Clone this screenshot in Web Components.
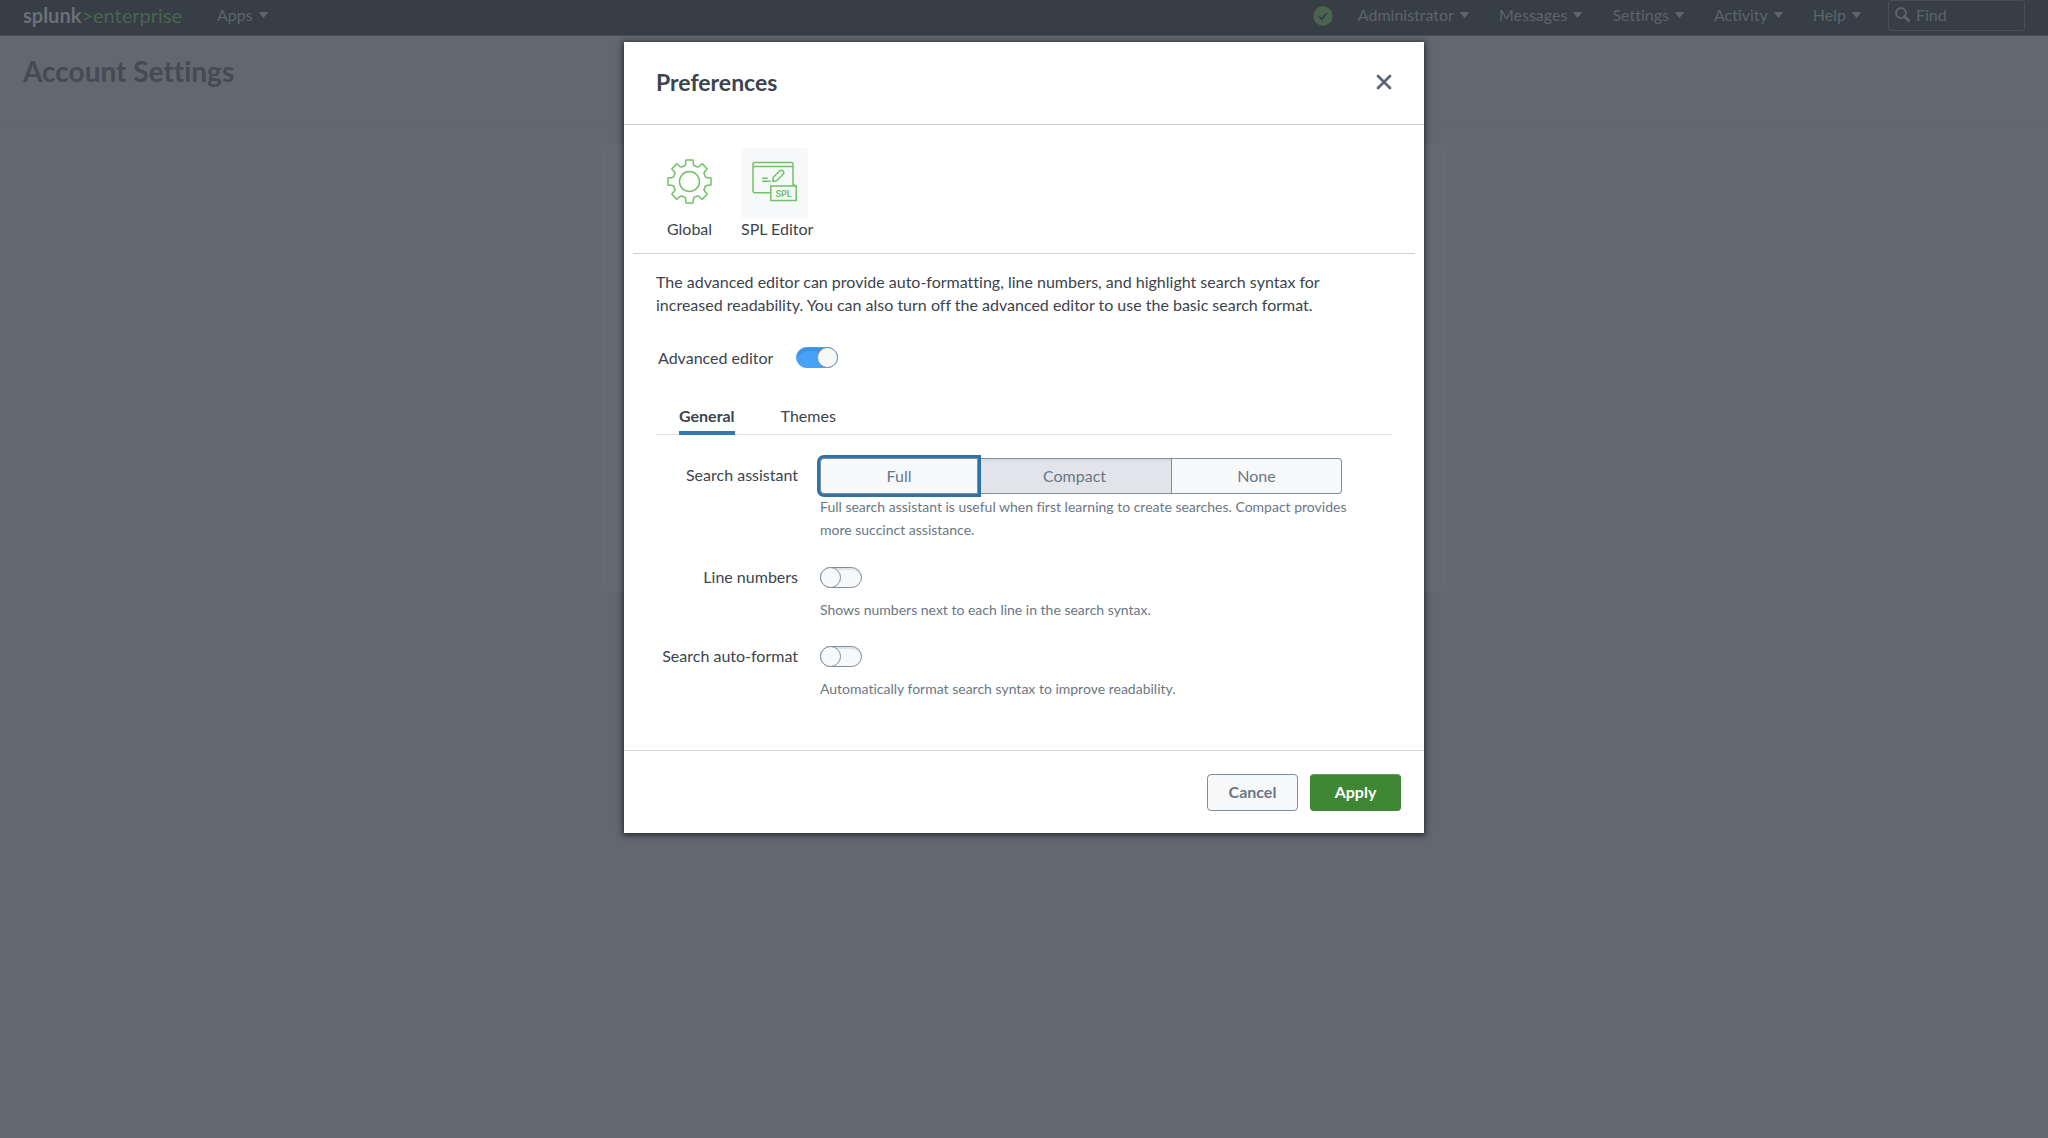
<!DOCTYPE html>
<html lang="en">
<head>
<meta charset="utf-8">
<title>Account Settings | Splunk Enterprise</title>
<style>
  :root {
    --ui-font: "Lato", "Open Sans", sans-serif;
    --ink: #3c444d;
    --muted: #6b7785;
    --control-border: #818d99;
    --control-bg: #f7f8fa;
  }
  body { margin: 0; min-height: 100vh; background: #63676f; color: var(--ink); font: 16px/23px var(--ui-font); font-variant-ligatures: none; }
</style>
</head>
<body>
<app-nav></app-nav>
<account-page>Account Settings</account-page>
<prefs-dialog heading="Preferences">
  <icon-choice slot="sections" icon="gear">Global</icon-choice>
  <icon-choice slot="sections" icon="spl" selected>SPL Editor</icon-choice>

  <span slot="intro">The advanced editor can provide auto-formatting, line numbers, and highlight search syntax for increased readability. You can also turn off the advanced editor to use the basic search format.</span>
  <pref-switch slot="master" label="Advanced editor" checked></pref-switch>
  <tab-strip slot="tabs"></tab-strip>

  <pref-row label="Search assistant" kind="segments">Full search assistant is useful when first learning to create searches. Compact provides more succinct assistance.</pref-row>
  <pref-row label="Line numbers" kind="switch">Shows numbers next to each line in the search syntax.</pref-row>
  <pref-row label="Search auto-format" kind="switch">Automatically format search syntax to improve readability.</pref-row>

  <action-button slot="actions">Cancel</action-button>
  <action-button slot="actions" primary>Apply</action-button>
</prefs-dialog>

<script>
const BASE = `*, *::before, *::after { box-sizing: border-box; }
  button, input { font: inherit; color: inherit; margin: 0; }
  button { cursor: pointer; }`;

const SWITCH = `
  input[type=checkbox] {
    appearance: none; display: flex; flex: none; width: 42px; height: 21px;
    border: 1px solid var(--control-border); border-radius: 11px; background: var(--control-bg);
    box-shadow: inset 0 2px 1px #dfe3e7;
  }
  input[type=checkbox]::before {
    content: ""; width: 21px; height: 21px; margin: -1px; flex: none;
    border: 1px solid var(--control-border); border-radius: 50%; background: var(--control-bg);
  }
  input[type=checkbox]:checked { justify-content: flex-end; background: #45a2f5; border-color: #45a2f5; box-shadow: inset 0 3px 1px #3c90dc; }`;

function define(name, render, setup) {
  customElements.define(name, class extends HTMLElement {
    constructor() { super(); this.attachShadow({ mode: "open" }); }
    connectedCallback() {
      const t = document.createElement("template");
      t.innerHTML = render(this);
      this.shadowRoot.replaceChildren(t.content.cloneNode(true));
      if (setup) setup(this, this.shadowRoot);
    }
  });
}

define("nav-menu", () => `
  <style>${BASE}
    :host { display: block; }
    button { display: flex; align-items: center; gap: 6px; padding: 0 0 2px; border: 0; background: none; white-space: nowrap; }
    svg { display: block; fill: currentColor; }
  </style>
  <button type="button" aria-haspopup="true"><slot></slot><svg width="9" height="6" viewBox="0 0 9 6" aria-hidden="true"><path d="M.6 0h7.8q.9.1.4.8L5 5.6q-.5.6-1 0L.2.8Q-.3.1.6 0Z"/></svg></button>`);

define("app-nav", () => `
  <style>${BASE}
    :host { display: block; background: #373e46; border-bottom: 1px solid #454c54; color: #5c646c; }
    nav { display: flex; align-items: center; height: 35px; padding: 0 23px 4px; }
    .logo { margin-right: 35px; padding-bottom: 2px; color: #4a6450; font-size: 20px; line-height: 28px; text-decoration: none; }
    .logo b { color: #6b7077; font-weight: 700; }
    .right { display: flex; align-items: center; gap: 30px; margin-left: auto; }
    .status { display: block; margin-right: -5px; }
    .find { display: flex; align-items: center; gap: 6px; width: 137px; height: 31px; padding: 0 6px 2px; margin-left: -3px; border: 1px solid #474e56; border-radius: 3px; }
    .find svg { flex: none; }
    input { flex: 1; min-width: 0; padding: 0; border: 0; outline: 0; background: none; }
    input::placeholder { color: #5c646c; opacity: 1; }
  </style>
  <nav aria-label="Main">
    <a class="logo" href="#"><b>splunk</b>&gt;enterprise</a>
    <nav-menu>Apps</nav-menu>
    <div class="right">
      <svg class="status" width="20" height="20" viewBox="0 0 20 20" aria-label="Healthy"><circle cx="10" cy="10" r="9.7" fill="#4a6450"/><path d="m6 10.4 2.7 2.8L14 7" fill="none" stroke="#373e46" stroke-width="1.8"/></svg>
      <nav-menu>Administrator</nav-menu>
      <nav-menu>Messages</nav-menu>
      <nav-menu>Settings</nav-menu>
      <nav-menu>Activity</nav-menu>
      <nav-menu>Help</nav-menu>
      <label class="find">
        <svg width="15" height="15" viewBox="0 0 15 15" fill="none" stroke="#5c646c" aria-hidden="true"><circle cx="6" cy="6" r="4.9" stroke-width="2"/><path d="m9.5 9.5 4 4" stroke-width="3" stroke-linecap="round"/></svg>
        <input type="text" placeholder="Find" aria-label="Find">
      </label>
    </div>
  </nav>`);

define("account-page", () => `
  <style>${BASE}
    :host { display: block; }
    h1 { margin: 0; padding: 17px 23px 32px; border-bottom: 1px solid #61656d; color: #434b53; font-size: 28px; line-height: 36px; font-weight: 700; }
    .panel { width: 846px; max-width: 100%; height: 446px; margin: 23px auto 0; background: #666a72; }
  </style>
  <h1><slot></slot></h1>
  <div class="panel"></div>`);

const ICONS = {
  gear: `<svg width="45" height="45" viewBox="0 0 45 45" fill="none" stroke="#72c168" stroke-width="1.5" stroke-linejoin="round"><circle cx="22.5" cy="22.5" r="10"/><path id="g" d=""/></svg>`,
  spl: `<svg width="45" height="45" viewBox="0 0 45 45" fill="none" stroke="#72c168" stroke-width="1.5">
    <path d="M18 33.8H3Q1 33.8 1 31.800V5.500Q1 3.500 3 3.500H39Q41 3.500 41 5.500V26.800M1 7.500H41M41 24.500l3.200 3.200"/>
    <path d="M18.800 26.900H44.200V41.500H18.800Z"/>
    <path d="M10.200 19.200h5.600M10.200 22.200h8.400"/>
    <path d="M20.800 22.600l.6-4.400 6.400-6.400q1.800-1.200 3.300.3 1.300 1.500 0 3.200l-6.400 6.400Z" stroke-linejoin="round"/>
    <text x="31.500" y="37.700" text-anchor="middle" fill="#72c168" stroke="none" font-family="Roboto, sans-serif" font-weight="700" font-size="9">SPL</text></svg>`
};

// Outline of an eight-toothed cog with hollows between the teeth.
function cogPath(c) {
  const pt = (r, deg) => {
    const a = deg * Math.PI / 180;
    return (c + r * Math.sin(a)).toFixed(2) + " " + (c - r * Math.cos(a)).toFixed(2);
  };
  let d = "M" + pt(21.8, -9);
  for (let k = 0; k < 8; k++) {
    const a = k * 45;
    d += `L${pt(21.8, a + 9)}Q${pt(21.2, a + 11)} ${pt(18.5, a + 11.5)}Q${pt(15.8, a + 15)} ${pt(16.6, a + 22.5)}Q${pt(15.8, a + 30)} ${pt(18.5, a + 33.5)}Q${pt(21.2, a + 34)} ${pt(21.8, a + 36)}`;
  }
  return d + "Z";
}

define("icon-choice", el => `
  <style>${BASE}
    :host { display: block; width: 67px; }
    button { display: flex; flex-direction: column; align-items: center; width: 100%; padding: 0; border: 0; background: none; line-height: 20px; white-space: nowrap; }
    .tile { display: grid; place-items: center; width: 67px; height: 71px; padding-bottom: 4px; border-radius: 4px; }
    :host([selected]) .tile { background: #f7f8fa; }
    :host([selected]) button { align-items: flex-start; }
    svg { display: block; }
  </style>
  <button type="button"><span class="tile">${ICONS[el.getAttribute("icon")]}</span><slot></slot></button>`,
  (el, root) => {
    const g = root.getElementById("g");
    if (g) g.setAttribute("d", cogPath(22.5));
  });

define("pref-switch", el => `
  <style>${BASE}${SWITCH}
    :host { display: block; }
    div { display: flex; align-items: center; gap: 23px; padding-left: 2px; }
  </style>
  <div><label for="s">${el.getAttribute("label")}</label><input type="checkbox" role="switch" id="s" ${el.hasAttribute("checked") ? "checked" : ""}></div>`);

define("tab-strip", () => `
  <style>${BASE}
    :host { display: block; border-bottom: 1px solid #e1e6eb; }
    div { display: flex; gap: 46px; padding-left: 23px; margin-bottom: -1px; }
    button { padding: 0 0 4px; border: 0; border-bottom: 4px solid transparent; background: none; }
    button[aria-selected=true] { border-bottom-color: #2f78b7; font-weight: 700; }
  </style>
  <div role="tablist"><button type="button" role="tab" aria-selected="true">General</button><button type="button" role="tab" aria-selected="false">Themes</button></div>`);

define("segment-control", () => `
  <style>${BASE}
    :host { display: block; margin-right: 50px; }
    div { display: grid; grid-template-columns: 158fr 194fr 170fr; color: var(--muted); }
    button { height: 36px; padding: 0 0 2px; border: 1px solid var(--control-border); border-left-width: 0; background: var(--control-bg); }
    button:first-child { border-left-width: 1px; border-radius: 4px 0 0 4px; box-shadow: 0 0 0 3px #2f72a8; }
    button:last-child { border-radius: 0 4px 4px 0; }
    button[aria-pressed=true] { background: #e1e5ea; box-shadow: inset 0 2px 1px #d5dae0; }
    button:first-child { z-index: 1; }
  </style>
  <div role="group" aria-label="Search assistant">
    <button type="button" aria-pressed="false">Full</button>
    <button type="button" aria-pressed="true">Compact</button>
    <button type="button" aria-pressed="false">None</button>
  </div>`);

define("pref-row", el => {
  const sw = el.getAttribute("kind") === "switch";
  return `
  <style>${BASE}${SWITCH}
    :host { display: grid; grid-template-columns: 142px 1fr; column-gap: 22px; padding-right: 20px; }
    :host([kind=segments]) { padding-right: 0; padding-bottom: 1px; }
    .label { text-align: right; white-space: nowrap; line-height: ${sw ? 19 : 34}px; }
    p { grid-column: 2; margin: ${sw ? 10 : 1}px 0 0; max-width: 545px; color: var(--muted); font-size: 14px; line-height: 23px; }
  </style>
  ${sw ? `<label class="label" for="c">${el.getAttribute("label")}</label><input type="checkbox" role="switch" id="c">`
       : `<span class="label">${el.getAttribute("label")}</span><segment-control></segment-control>`}
  <p><slot></slot></p>`;
});

define("action-button", () => `
  <style>${BASE}
    :host { display: block; }
    button { min-width: 91px; height: 37px; padding: 0 16px 2px; border: 1px solid var(--control-border); border-radius: 4px; background: var(--control-bg); color: var(--muted); font-weight: 700; }
    :host([primary]) button { border-color: #3f8635; border-top-color: #63a05a; background: #3f8635; color: #fff; }
  </style>
  <button type="button"><slot></slot></button>`);

define("prefs-dialog", el => `
  <style>${BASE}
    :host { position: absolute; inset: 0; display: flex; justify-content: center; align-items: flex-start; padding-top: 42px; }
    .dialog { width: 800px; max-width: 100%; background: #fff; box-shadow: 0 1px 6px 1px rgba(20, 26, 31, .8); }
    header { display: flex; align-items: center; justify-content: space-between; height: 83px; padding: 0 32px 2px; border-bottom: 1px solid #c3cbd4; }
    h2 { margin: 0; font-size: 23px; line-height: 30px; font-weight: 700; }
    .close { display: block; padding: 0; border: 0; background: none; }
    .close svg { display: block; }
    .sections { display: flex; gap: 18px; margin: 0 9px; padding: 23px 23px 14px; border-bottom: 1px solid #cfd3dc; }
    .body { padding: 16px 32px 50px; }
    .intro { width: 680px; margin: 0 0 30px; }
    .tabs { margin: 35px 0 23px; }
    .rows { display: flex; flex-direction: column; gap: 25px; }
    footer { display: flex; justify-content: flex-end; gap: 12px; padding: 23px 23px 22px; border-top: 1px solid #d5d9e0; }
  </style>
  <section class="dialog" role="dialog" aria-labelledby="h">
    <header>
      <h2 id="h">${el.getAttribute("heading")}</h2>
      <button class="close" type="button" aria-label="Close"><svg width="16" height="16" viewBox="0 0 16 16" fill="none" stroke="#5c6773" stroke-width="2.800" stroke-linecap="round"><path d="m2 2 12 12M14 2 2 14"/></svg></button>
    </header>
    <div class="sections"><slot name="sections"></slot></div>
    <div class="body">
      <p class="intro"><slot name="intro"></slot></p>
      <slot name="master"></slot>
      <div class="tabs"><slot name="tabs"></slot></div>
      <div class="rows"><slot></slot></div>
    </div>
    <footer><slot name="actions"></slot></footer>
  </section>`);
</script>
</body>
</html>
